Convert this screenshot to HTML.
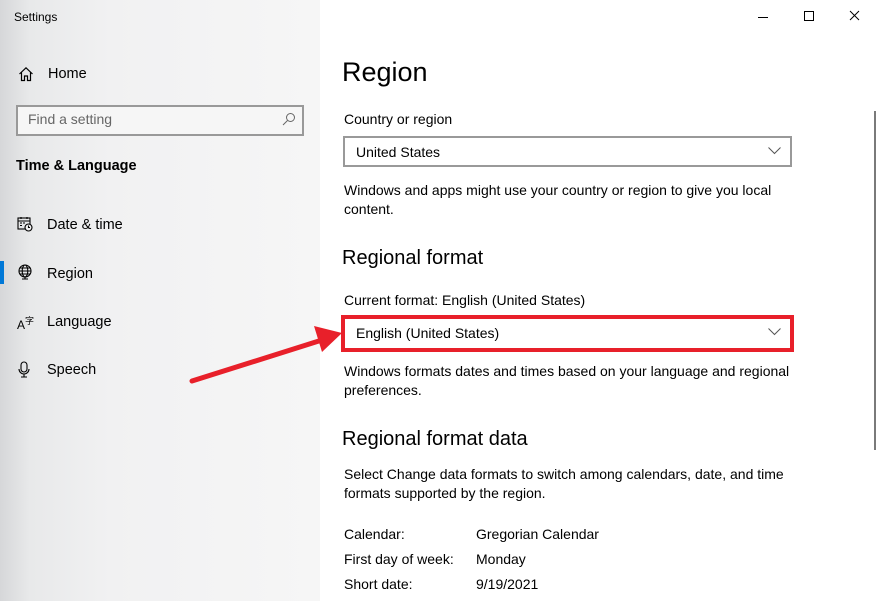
<!DOCTYPE html>
<html><head><meta charset="utf-8"><style>
*{margin:0;padding:0;box-sizing:border-box}
body{width:878px;height:601px;overflow:hidden;position:relative;font-family:"Liberation Sans",sans-serif;color:#000;background:#fff}
.side{position:absolute;left:0;top:0;width:320px;height:601px;background:linear-gradient(90deg,#d6d7d9 0px,#e8e9ea 30px,#f1f1f2 110px,#f6f6f6 320px)}
.t{position:absolute;white-space:nowrap}
.s15{font-size:14.5px}
.s14{font-size:14px}
.dd{position:absolute;left:343px;width:449px;height:31px;border:2px solid #999;background:#fff}
.dd span{position:absolute;left:11px;top:6px;font-size:14px}
.dd svg{position:absolute;right:9px;top:9px}
</style></head><body>
<div class="side"></div>
<div class="t" style="left:14px;top:10px;font-size:12px">Settings</div>
<svg class="t" style="left:18px;top:66px" width="16" height="16" viewBox="0 0 16 16" fill="none" stroke="#000" stroke-width="1.2"><path d="M1.5 8 L8 1.8 L14.5 8 M3.5 6.5 V14.5 H6.5 V10 H9.5 V14.5 H12.5 V6.5"/></svg>
<div class="t s15" style="left:48px;top:66px">Home</div>
<div style="position:absolute;left:16px;top:105px;width:288px;height:31px;border:2px solid #999;background:#f6f6f6"></div>
<div class="t s14" style="left:28px;top:111px;color:#666">Find a setting</div>
<svg class="t" style="left:282px;top:112px" width="14" height="14" viewBox="0 0 14 14" fill="none" stroke="#666" stroke-width="1"><circle cx="8.5" cy="5.5" r="4"/><path d="M5.5 8.5 L1 13"/></svg>
<div class="t" style="left:16px;top:158px;font-size:14.5px;font-weight:bold">Time &amp; Language</div>
<svg class="t" style="left:17px;top:216px" width="16" height="16" viewBox="0 0 16 16" fill="none" stroke="#000" stroke-width="1.1"><rect x="1" y="2" width="12" height="11"/><path d="M1 5h12M4 1v2M10 1v2M3 7h2M6 7h2M3 9.5h2"/><circle cx="11.5" cy="11.5" r="3.5" fill="#f0f0f0"/><path d="M11.5 9.5v2h1.5"/></svg>
<div class="t s15" style="left:47px;top:217px">Date &amp; time</div>
<div style="position:absolute;left:0;top:261px;width:4px;height:23px;background:#0078d7"></div>
<svg class="t" style="left:17px;top:264px" width="16" height="16" viewBox="0 0 16 16" fill="none" stroke="#000" stroke-width="1.1"><circle cx="8" cy="7" r="6"/><ellipse cx="8" cy="7" rx="2.8" ry="6"/><path d="M2 7h12M3 4h10M3 10h10M8 13v2M5 15h6"/></svg>
<div class="t s15" style="left:47px;top:266px">Region</div>
<div class="t" style="left:17px;top:314px;font-size:12px">A<sup style="font-size:9px;font-family:'Noto Sans CJK SC',sans-serif">字</sup></div>
<div class="t s15" style="left:47px;top:314px">Language</div>
<svg class="t" style="left:17px;top:361px" width="14" height="17" viewBox="0 0 14 17" fill="none" stroke="#000" stroke-width="1.1"><rect x="4" y="1" width="6" height="10" rx="3"/><path d="M2 8a5 5 0 0 0 10 0M7 13v3M4 16h6"/></svg>
<div class="t s15" style="left:47px;top:362px">Speech</div>

<svg class="t" style="left:758px;top:9px" width="110" height="16" viewBox="0 0 110 16" fill="none" stroke="#000" stroke-width="1"><path d="M0 8.5h10"/><rect x="46.5" y="2.5" width="9" height="9"/><path d="M92 2l9 9M101 2l-9 9"/></svg>
<div style="position:absolute;left:874px;top:111px;width:2px;height:339px;background:#7a7a7a"></div>

<div class="t" style="left:342px;top:57px;font-size:27px;font-weight:300">Region</div>
<div class="t s14" style="left:344px;top:111px">Country or region</div>
<div class="dd" style="top:136px"><span>United States</span><svg width="13" height="8" viewBox="0 0 13 8" fill="none" stroke="#555"><path d="M0.5 0.5 L6.5 6.5 L12.5 0.5"/></svg></div>
<div class="t s14" style="left:344px;top:181px;line-height:19px">Windows and apps might use your country or region to give you local<br>content.</div>
<div class="t" style="left:342px;top:247px;font-size:20px">Regional format</div>
<div class="t s14" style="left:344px;top:292px">Current format: English (United States)</div>
<div class="dd" style="top:317px;border-color:#fff"><span>English (United States)</span><svg width="13" height="8" viewBox="0 0 13 8" fill="none" stroke="#555"><path d="M0.5 0.5 L6.5 6.5 L12.5 0.5"/></svg></div>
<div class="t s14" style="left:344px;top:362px;line-height:19px">Windows formats dates and times based on your language and regional<br>preferences.</div>
<div class="t" style="left:342px;top:428px;font-size:20px">Regional format data</div>
<div class="t s14" style="left:344px;top:465px;line-height:19px">Select Change data formats to switch among calendars, date, and time<br>formats supported by the region.</div>
<div class="t s14" style="left:344px;top:526px">Calendar:</div><div class="t s14" style="left:476px;top:526px">Gregorian Calendar</div>
<div class="t s14" style="left:344px;top:551px">First day of week:</div><div class="t s14" style="left:476px;top:551px">Monday</div>
<div class="t s14" style="left:344px;top:576px">Short date:</div><div class="t s14" style="left:476px;top:576px">9/19/2021</div>

<svg style="position:absolute;left:0;top:0" width="878" height="601">
<rect x="343" y="317" width="449" height="33" fill="none" stroke="#e8202a" stroke-width="4"/>
<path d="M192 381 L322 340" stroke="#e8202a" stroke-width="5" stroke-linecap="round"/>
<path d="M342 333 L314 326 L322 352 Z" fill="#e8202a"/>
</svg>
</body></html>
